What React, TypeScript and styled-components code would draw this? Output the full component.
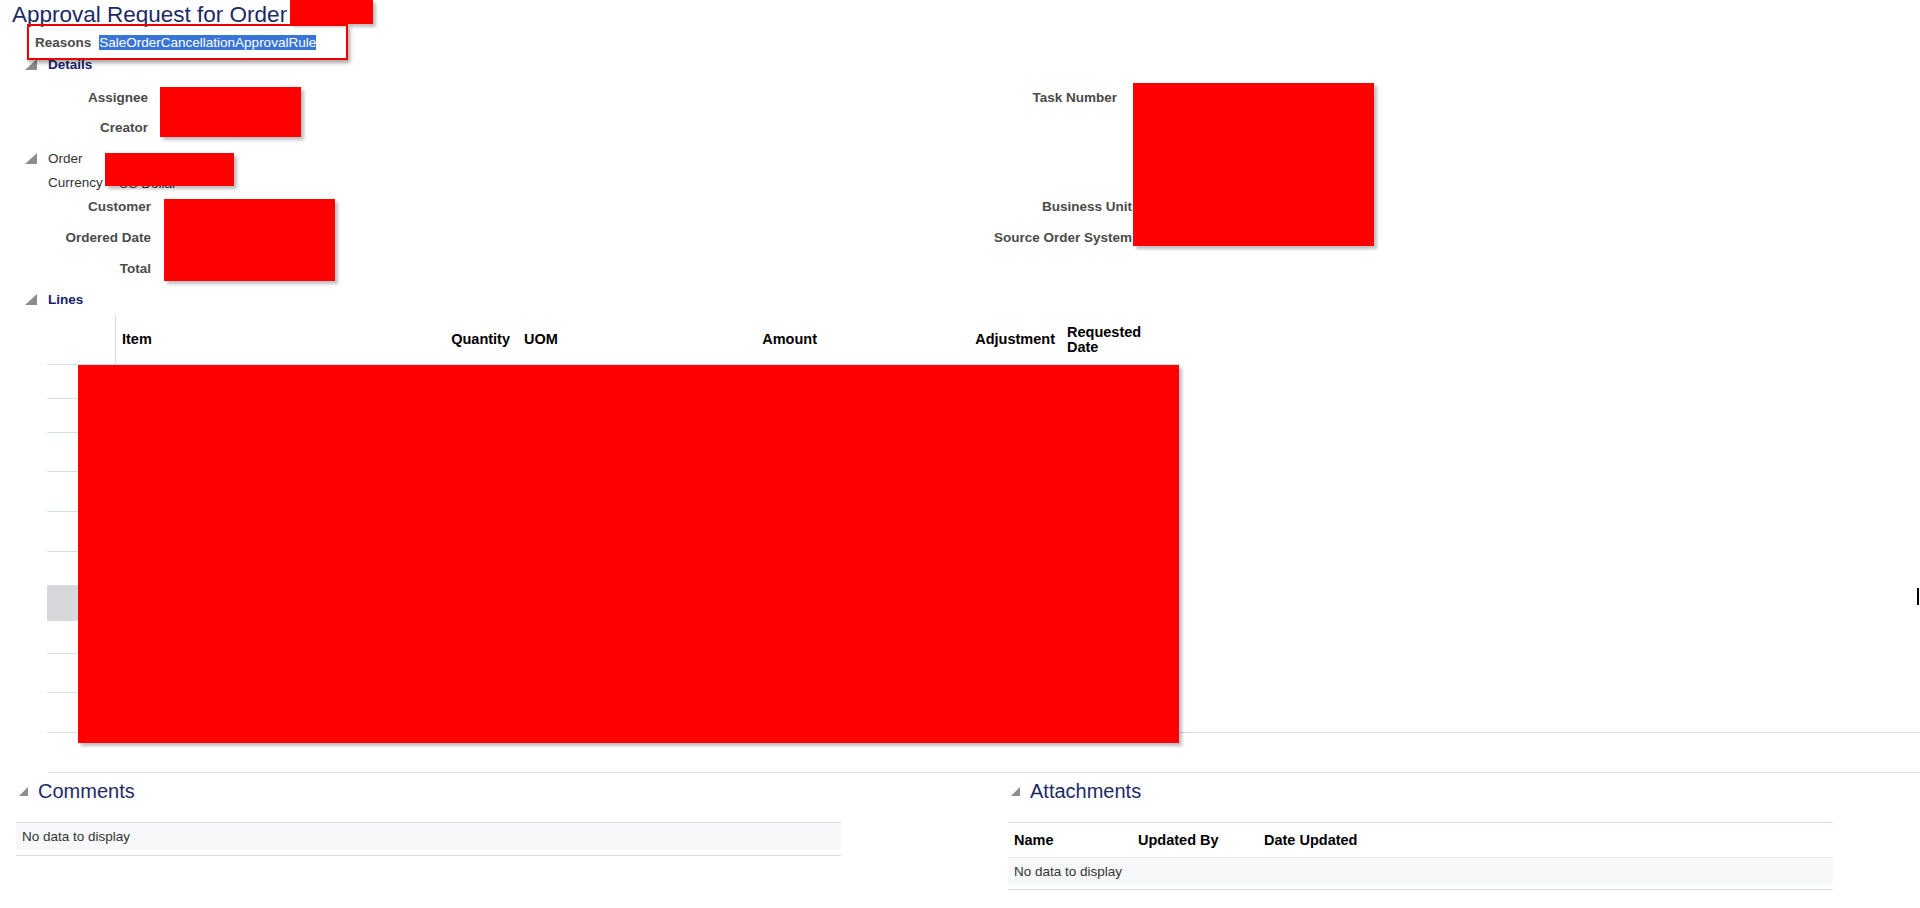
import React from 'react';
import styled, { createGlobalStyle } from 'styled-components';

const GlobalStyle = createGlobalStyle`
  html, body {
    margin: 0;
    padding: 0;
    background: #ffffff;
  }
  body {
    font-family: "Liberation Sans", Arial, sans-serif;
    font-size: 13.5px;
    color: #333333;
  }
`;

const Page = styled.div`
  position: relative;
  width: 1920px;
  height: 908px;
  overflow: hidden;
`;

const Title = styled.h1`
  margin: 0;
  padding: 2px 0 0 12px;
  height: 26px;
  font-size: 22.5px;
  line-height: 26px;
  font-weight: normal;
  color: #1d2a64;
  white-space: nowrap;
`;

const ReasonsRow = styled.div`
  display: flex;
  align-items: center;
  height: 22px;
  margin-top: 3px;
  padding-left: 35px;
`;

const Label = styled.span`
  font-weight: bold;
  color: #4a4a4a;
  white-space: nowrap;
`;

const SelectedText = styled.span`
  margin-left: 8px;
  background: #3875d7;
  color: #ffffff;
`;

const SectionHeader = styled.div<{ $top?: number }>`
  display: flex;
  align-items: center;
  gap: 11px;
  height: 22px;
  padding-left: 25px;
  margin-top: ${({ $top }) => $top ?? 0}px;
`;

const SectionTitle = styled.span<{ $plain?: boolean }>`
  font-weight: ${({ $plain }) => ($plain ? 'normal' : 'bold')};
  color: ${({ $plain }) => ($plain ? '#333333' : '#18236a')};
`;

const Columns = styled.div<{ $top: number }>`
  display: grid;
  grid-template-columns: 960px 1fr;
  margin-top: ${({ $top }) => $top}px;
`;

const Form = styled.div<{ $indent: number; $labelWidth: number; $row: number }>`
  display: grid;
  grid-template-columns: ${({ $labelWidth }) => $labelWidth}px 1fr;
  grid-auto-rows: ${({ $row }) => $row}px;
  column-gap: 12px;
  padding-left: ${({ $indent }) => $indent}px;
  align-items: center;
`;

const FormLabel = styled(Label)`
  text-align: right;
`;

const FormValue = styled.span`
  color: #333333;
`;

const CurrencyRow = styled.div`
  display: flex;
  align-items: center;
  gap: 16px;
  height: 18px;
  margin-top: 4px;
  padding-left: 48px;
`;

const CurrencyValue = styled(FormValue)`
  position: relative;
  top: 1px;
`;

const TableWrap = styled.div`
  margin: 5px 0 0 47px;
  border-bottom: 1px solid #d6dde3;
`;

const GRID = '69px 329px 71px 124px 183px 238px 118px';

const HeaderRow = styled.div`
  display: grid;
  grid-template-columns: ${GRID};
  width: 1132px;
  height: 50px;
  box-sizing: border-box;
  border-bottom: 1px solid #d6dde3;
`;

const HeaderCell = styled.div<{ $align?: 'left' | 'right'; $pad?: number; $divider?: boolean; $wrap?: boolean }>`
  display: flex;
  align-items: center;
  justify-content: ${({ $align }) => ($align === 'right' ? 'flex-end' : 'flex-start')};
  padding-left: ${({ $align, $pad }) => ($align === 'right' ? 0 : $pad ?? 6)}px;
  padding-right: ${({ $align, $wrap }) => ($align === 'right' ? 6 : $wrap ? 30 : 0)}px;
  font-size: 14.5px;
  line-height: 15px;
  font-weight: bold;
  color: #000000;
  border-right: ${({ $divider }) => ($divider ? '1px solid #d6dde3' : 'none')};
`;

const BodyRow = styled.div<{ $h: number; $selected?: boolean; $last?: boolean }>`
  display: grid;
  grid-template-columns: ${GRID};
  width: 1132px;
  height: ${({ $h }) => $h}px;
  box-sizing: border-box;
  background: ${({ $selected }) => ($selected ? '#d6d8db' : 'transparent')};
  border-bottom: ${({ $last, $selected }) =>
    $last ? 'none' : `1px solid ${$selected ? '#d6d8db' : '#d6dde3'}`};
`;

const Divider = styled.div`
  margin: 39px 0 0 48px;
  border-top: 1px solid #d6dde3;
`;

const Panels = styled.div`
  display: grid;
  grid-template-columns: 825px 825px;
  column-gap: 167px;
  padding-left: 16px;
`;

const PanelHeader = styled.div`
  display: flex;
  align-items: center;
  gap: 10px;
  height: 26px;
  margin-top: 5px;
  padding-left: 3px;
  font-size: 20px;
  color: #1d2a64;
`;

const DataTable = styled.div<{ $bottomGap: number }>`
  margin-top: 18px;
  border-top: 1px solid #d6dde3;
  border-bottom: 1px solid #d6dde3;
  padding-bottom: ${({ $bottomGap }) => $bottomGap}px;
`;

const DataHeader = styled.div`
  display: grid;
  grid-template-columns: 124px 126px 1fr;
  height: 35px;
  box-sizing: border-box;
  border-bottom: 1px solid #e6eaee;
  align-items: center;
  font-size: 14.5px;
  font-weight: bold;
  color: #000000;

  span {
    padding-left: 6px;
  }
`;

const NoData = styled.div`
  height: 27px;
  line-height: 27px;
  padding-left: 6px;
  background: #f7f8fa;
  color: #333333;
`;

const Redaction = styled.div<{ $x: number; $y: number; $w: number; $h: number }>`
  position: absolute;
  left: ${({ $x }) => $x}px;
  top: ${({ $y }) => $y}px;
  width: ${({ $w }) => $w}px;
  height: ${({ $h }) => $h}px;
  background: #ff0000;
  box-shadow: 3px 3px 3px rgba(0, 0, 0, 0.25);
`;

const Highlight = styled.div`
  position: absolute;
  left: 27px;
  top: 24px;
  width: 321px;
  height: 36px;
  box-sizing: border-box;
  border: 2px solid #ee0000;
  box-shadow: 2px 3px 4px rgba(0, 0, 0, 0.35);
`;

const Caret = styled.div`
  position: absolute;
  left: 1917px;
  top: 588px;
  width: 2px;
  height: 17px;
  background: #000000;
`;

const Disclosure: React.FC<{ small?: boolean }> = ({ small }) => {
  const w = small ? 9 : 12;
  const h = small ? 9 : 11;
  return (
    <svg width={w} height={h} viewBox={`0 0 ${w} ${h}`}>
      <polygon points={`${w},0 ${w},${h} 0,${h}`} fill="#8c8c8c" />
    </svg>
  );
};

const lineRows = [34, 34, 39, 40, 40, 34, 35, 33, 39, 39];

const redactions = [
  { x: 290, y: 0, w: 83, h: 24 },
  { x: 160, y: 87, w: 141, h: 50 },
  { x: 1133, y: 83, w: 241, h: 163 },
  { x: 105, y: 153, w: 129, h: 33 },
  { x: 164, y: 199, w: 171, h: 82 },
  { x: 78, y: 365, w: 1101, h: 378 },
];

export default function App() {
  return (
    <Page>
      <GlobalStyle />
      <Title>Approval Request for Order</Title>

      <ReasonsRow>
        <Label>Reasons</Label>
        <SelectedText>SaleOrderCancellationApprovalRule</SelectedText>
      </ReasonsRow>

      <SectionHeader>
        <Disclosure />
        <SectionTitle>Details</SectionTitle>
      </SectionHeader>
      <Columns $top={7}>
        <Form $indent={48} $labelWidth={100} $row={30}>
          <FormLabel>Assignee</FormLabel>
          <FormValue />
          <FormLabel>Creator</FormLabel>
          <FormValue />
        </Form>
        <Form $indent={0} $labelWidth={157} $row={30}>
          <FormLabel>Task Number</FormLabel>
          <FormValue />
        </Form>
      </Columns>

      <SectionHeader $top={5}>
        <Disclosure />
        <SectionTitle $plain>Order</SectionTitle>
      </SectionHeader>
      <CurrencyRow>
        <span>Currency</span>
        <CurrencyValue>US Dollar</CurrencyValue>
      </CurrencyRow>
      <Columns $top={0}>
        <Form $indent={48} $labelWidth={103} $row={31}>
          <FormLabel>Customer</FormLabel>
          <FormValue />
          <FormLabel>Ordered Date</FormLabel>
          <FormValue />
          <FormLabel>Total</FormLabel>
          <FormValue />
        </Form>
        <Form $indent={0} $labelWidth={172} $row={31}>
          <FormLabel>Business Unit</FormLabel>
          <FormValue />
          <FormLabel>Source Order System</FormLabel>
          <FormValue />
        </Form>
      </Columns>

      <SectionHeader $top={4}>
        <Disclosure />
        <SectionTitle>Lines</SectionTitle>
      </SectionHeader>
      <TableWrap>
        <HeaderRow>
          <HeaderCell $divider />
          <HeaderCell>Item</HeaderCell>
          <HeaderCell $align="right">Quantity</HeaderCell>
          <HeaderCell $pad={8}>UOM</HeaderCell>
          <HeaderCell $align="right">Amount</HeaderCell>
          <HeaderCell $align="right">Adjustment</HeaderCell>
          <HeaderCell $wrap>Requested Date</HeaderCell>
        </HeaderRow>
        {lineRows.map((h, i) => (
          <BodyRow key={i} $h={h} $selected={i === 6} $last={i === lineRows.length - 1} />
        ))}
      </TableWrap>

      <Divider />

      <Panels>
        <div>
          <PanelHeader>
            <Disclosure small />
            <span>Comments</span>
          </PanelHeader>
          <DataTable $bottomGap={5}>
            <NoData>No data to display</NoData>
          </DataTable>
        </div>
        <div>
          <PanelHeader>
            <Disclosure small />
            <span>Attachments</span>
          </PanelHeader>
          <DataTable $bottomGap={4}>
            <DataHeader>
              <span>Name</span>
              <span>Updated By</span>
              <span>Date Updated</span>
            </DataHeader>
            <NoData>No data to display</NoData>
          </DataTable>
        </div>
      </Panels>

      {redactions.map((r, i) => (
        <Redaction key={i} $x={r.x} $y={r.y} $w={r.w} $h={r.h} />
      ))}
      <Highlight />
      <Caret />
    </Page>
  );
}
